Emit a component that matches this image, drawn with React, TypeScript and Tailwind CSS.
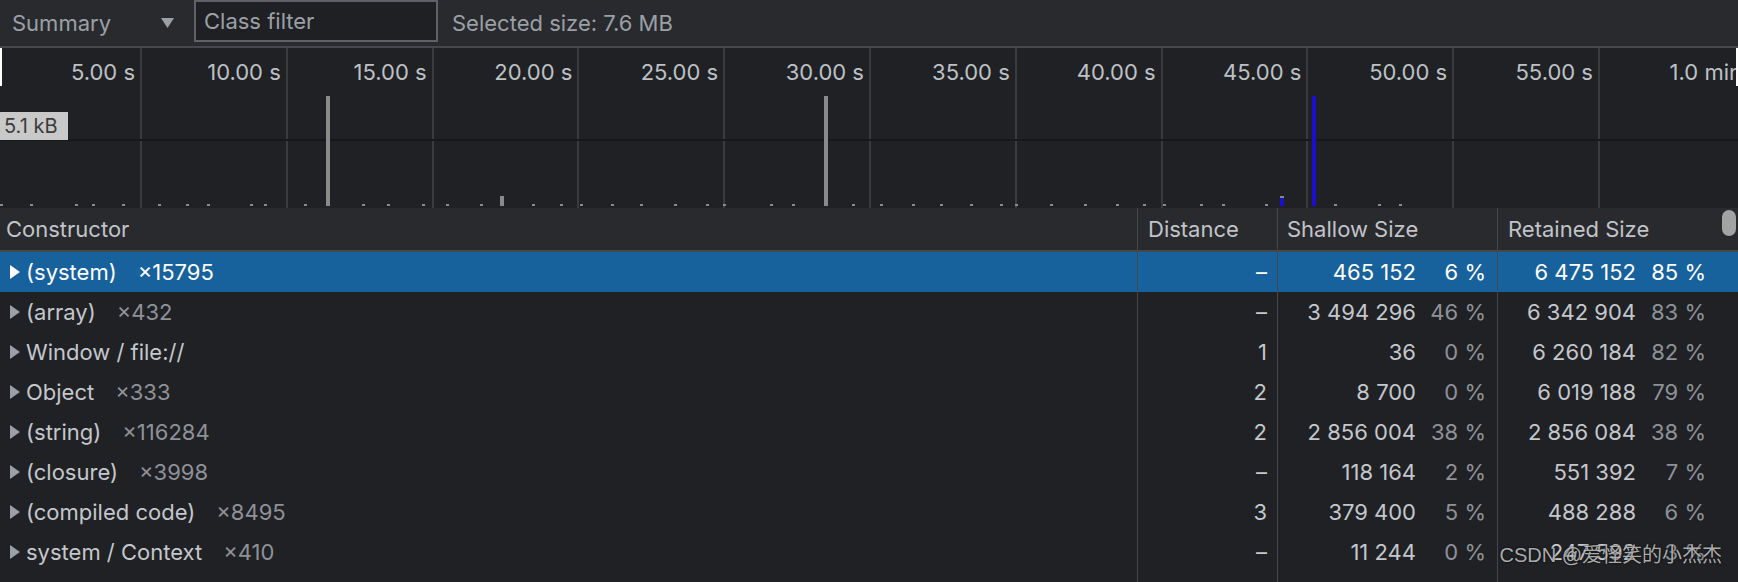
import React from "react";

const ticks = [0, 30, 75, 92, 122, 158, 186, 207, 250, 264, 304, 362, 387, 422, 446, 480, 532, 560, 580, 611, 640, 674, 706, 723, 770, 792, 852, 880, 912, 940, 970, 1000, 1015, 1050, 1084, 1116, 1143, 1163, 1200, 1222, 1265, 1334, 1378, 1399];

const labels = ["5.00 s", "10.00 s", "15.00 s", "20.00 s", "25.00 s", "30.00 s", "35.00 s", "40.00 s", "45.00 s", "50.00 s", "55.00 s"];

type Row = { name: string; count?: string; dist: string; sv: string; sp: string; rv: string; rp: string };

const rows: Row[] = [
  { name: "(system)", count: "×15795", dist: "–", sv: "465 152", sp: "6 %", rv: "6 475 152", rp: "85 %" },
  { name: "(array)", count: "×432", dist: "–", sv: "3 494 296", sp: "46 %", rv: "6 342 904", rp: "83 %" },
  { name: "Window / file://", dist: "1", sv: "36", sp: "0 %", rv: "6 260 184", rp: "82 %" },
  { name: "Object", count: "×333", dist: "2", sv: "8 700", sp: "0 %", rv: "6 019 188", rp: "79 %" },
  { name: "(string)", count: "×116284", dist: "2", sv: "2 856 004", sp: "38 %", rv: "2 856 084", rp: "38 %" },
  { name: "(closure)", count: "×3998", dist: "–", sv: "118 164", sp: "2 %", rv: "551 392", rp: "7 %" },
  { name: "(compiled code)", count: "×8495", dist: "3", sv: "379 400", sp: "5 %", rv: "488 288", rp: "6 %" },
  { name: "system / Context", count: "×410", dist: "–", sv: "11 244", sp: "0 %", rv: "247 592", rp: "3 %" },
];

function Triangle({ sel }: { sel: boolean }) {
  return (
    <svg width="10" height="14" viewBox="0 0 10 14" className="shrink-0">
      <path d="M0 0 L10 7 L0 14 Z" fill={sel ? "#ffffff" : "#9aa0a6"} />
    </svg>
  );
}

export default function App() {
  return (
    <div className="relative w-[1738px] h-[582px] overflow-hidden bg-[#202124] font-['Inter','Liberation_Sans',sans-serif] text-[22px] leading-none">
      {/* Toolbar */}
      <div className="h-[48px] flex items-center bg-[#292a2d] border-b-2 border-[#47484c] text-[#9aa0a6]">
        <div className="w-[194px] h-full flex items-center justify-between pl-[12px] pr-[20px]">
          <span>Summary</span>
          <svg width="13" height="10" viewBox="0 0 13 10">
            <path d="M0 0 L13 0 L6.5 10 Z" fill="#9aa0a6" />
          </svg>
        </div>
        <div className="w-[244px] h-[42px] self-start border-2 border-[#5f6166] bg-[#1f2023] flex items-center pl-[8px]">
          Class filter
        </div>
        <div className="pl-[14px]">Selected size: 7.6 MB</div>
      </div>

      {/* Timeline */}
      <div className="relative h-[160px] flex text-[#bdc1c6]">
        <div className="w-[142px] shrink-0 border-r-2 border-[#3a3b3f] flex justify-end pr-[5px] pt-[13px]">{labels[0]}</div>
        {labels.slice(1).map((l) => (
          <div key={l} className="w-[145.8px] shrink-0 border-r-2 border-[#3a3b3f] flex justify-end pr-[5px] pt-[13px]">
            {l}
          </div>
        ))}
        <div className="flex-1 flex justify-end pt-[13px] overflow-hidden whitespace-nowrap">
          <span className="-mr-[4px]">1.0 min</span>
        </div>

        <svg className="absolute inset-0" width="1738" height="160" viewBox="0 0 1738 160">
          <rect x="0" y="91" width="1738" height="2" fill="#17181a" />
          {ticks.map((x) => (
            <rect key={x} x={x} y="156" width="3" height="2" fill="#8a8a8a" />
          ))}
          <rect x="326" y="48" width="4" height="110" fill="#8a8a8a" />
          <rect x="824" y="48" width="4" height="110" fill="#8a8a8a" />
          <rect x="500" y="148" width="4" height="10" fill="#8a8a8a" />
          <rect x="1312" y="48" width="4" height="110" fill="#1a0fcc" />
          <rect x="1280" y="148" width="4" height="2" fill="#8a8a8a" />
          <rect x="1280" y="150" width="4" height="8" fill="#1a0fcc" />
          <rect x="0" y="0" width="2" height="38" fill="#ffffff" />
          <rect x="1736" y="0" width="2" height="38" fill="#ffffff" />
        </svg>
        <div className="absolute left-0 top-[64px] w-[68px] h-[28px] bg-[#c9c9c9] text-[#3c3c3c] text-[20px] flex items-center pl-[4px]">
          5.1 kB
        </div>
      </div>

      {/* Table */}
      <div className="flex flex-col h-[374px]">
        <div className="h-[44px] shrink-0 grid grid-cols-[1137px_140px_220px_1fr] bg-[#292a2d] border-b-2 border-[#46474b] text-[#c1c4c9]">
          <div className="flex items-center pl-[6px]">Constructor</div>
          <div className="flex items-center pl-[10px] border-l border-[#46474b]">Distance</div>
          <div className="flex items-center pl-[9px] border-l border-[#46474b]">Shallow Size</div>
          <div className="flex items-center pl-[10px] border-l border-[#46474b]">Retained Size</div>
        </div>
        {rows.map((r, i) => {
          const sel = i === 0;
          const main = sel ? "text-white" : "text-[#c4c7cc]";
          const sub = sel ? "text-white" : "text-[#8e9298]";
          return (
            <div
              key={r.name}
              className={`h-[40px] shrink-0 grid grid-cols-[1137px_140px_220px_1fr] ${sel ? "bg-[#17619d]" : "bg-[#202124]"} ${main}`}
            >
              <div className="flex items-center pl-[10px] whitespace-nowrap">
                <Triangle sel={sel} />
                <span className="ml-[6px]">{r.name}</span>
                {r.count && <span className={`ml-[21px] ${sub}`}>{r.count}</span>}
              </div>
              <div className="flex items-center justify-end pr-[10px] border-l border-[#46474b]">{r.dist}</div>
              <div className="flex items-center justify-end pr-[11px] border-l border-[#46474b]">
                <span>{r.sv}</span>
                <span className={`w-[70px] text-right ${sub}`}>{r.sp}</span>
              </div>
              <div className="flex items-center justify-end pr-[32px] border-l border-[#46474b]">
                <span>{r.rv}</span>
                <span className={`w-[70px] text-right ${sub}`}>{r.rp}</span>
              </div>
            </div>
          );
        })}
        <div className="flex-1 grid grid-cols-[1137px_140px_220px_1fr]">
          <div />
          <div className="border-l border-[#46474b]" />
          <div className="border-l border-[#46474b]" />
          <div className="border-l border-[#46474b]" />
        </div>
      </div>
      <div className="h-[4px] bg-[#3c3d41]" />

      {/* Scrollbar thumb */}
      <div className="absolute right-[2px] top-[210px] w-[14px] h-[26px] rounded-full bg-[#a3a3a3]" />

      {/* Watermark */}
      <div className="absolute right-[16px] bottom-[17px] text-[20px] text-[#d8d8d8]/80 font-['Liberation_Sans','Noto_Sans_CJK_SC',sans-serif] [text-shadow:0_0_2px_#000]">
        CSDN @爱怪笑的小杰杰
      </div>
    </div>
  );
}
